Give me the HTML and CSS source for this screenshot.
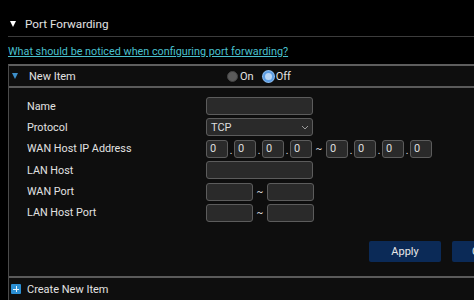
FILE: index.html
```html
<!DOCTYPE html>
<html lang="en">
<head>
  <meta charset="UTF-8">
  <title>Port Forwarding</title>
  <link rel="stylesheet" href="styles.css">
</head>
<body>
  <div class="page">
    <div class="section-head">
      <span class="tri tri-white"></span>
      <span>Port Forwarding</span>
    </div>
    <div class="tip">
      <a href="#">What should be noticed when configuring port forwarding?</a>
    </div>
    <div class="box">
      <div class="item-head">
        <span class="tri tri-blue"></span>
        <span class="item-title">New Item</span>
        <div class="switch">
          <label class="radio"><span class="dot"></span>On</label>
          <label class="radio"><span class="dot checked"></span>Off</label>
        </div>
      </div>
      <div class="item-body">
        <div class="row">
          <span class="label">Name</span>
          <span class="field wide"></span>
        </div>
        <div class="row">
          <span class="label">Protocol</span>
          <span class="field wide select">TCP
            <svg class="caret" width="8" height="5" viewBox="0 0 8 5"><path d="M1 1l3 3 3-3" fill="none" stroke="#9a9a9a" stroke-width="1"/></svg>
          </span>
        </div>
        <div class="row">
          <span class="label">WAN Host IP Address</span>
          <div class="ip">
            <span class="field oct">0</span><span class="sep">.</span>
            <span class="field oct">0</span><span class="sep">.</span>
            <span class="field oct">0</span><span class="sep">.</span>
            <span class="field oct">0</span><span class="tilde">~</span>
            <span class="field oct">0</span><span class="sep">.</span>
            <span class="field oct">0</span><span class="sep">.</span>
            <span class="field oct">0</span><span class="sep">.</span>
            <span class="field oct">0</span>
          </div>
        </div>
        <div class="row">
          <span class="label">LAN Host</span>
          <span class="field wide"></span>
        </div>
        <div class="row">
          <span class="label">WAN Port</span>
          <div class="ip">
            <span class="field port"></span><span class="tilde">~</span><span class="field port"></span>
          </div>
        </div>
        <div class="row">
          <span class="label">LAN Host Port</span>
          <div class="ip">
            <span class="field port"></span><span class="tilde">~</span><span class="field port"></span>
          </div>
        </div>
        <div class="actions">
          <button class="btn">Apply</button>
          <button class="btn btn-cancel">Cancel</button>
        </div>
      </div>
      <div class="create">
        <span class="plus"></span>
        <span>Create New Item</span>
      </div>
    </div>
  </div>
</body>
</html>
```

FILE: styles.css
```css
body {
  margin: 0;
  background: #000;
  color: #e2e2e2;
  font-family: Roboto, "Noto Sans", sans-serif;
  overflow: hidden;
}
.page {
  width: 560px;
  padding-left: 8px;
}
.section-head {
  display: flex;
  align-items: center;
  gap: 9px;
  height: 37px;
  box-sizing: border-box;
  padding: 12px 0 0 2px;
  font-size: 11.7px;
  border-bottom: 1px solid #3c3c3c;
}
.tri {
  width: 0;
  height: 0;
  border-left: 3.5px solid transparent;
  border-right: 3.5px solid transparent;
  border-top: 6px solid #fff;
}
.tri-blue {
  border-top-color: #3d8fca;
}
.tip {
  height: 27px;
  display: flex;
  align-items: center;
  padding-top: 1px;
  box-sizing: border-box;
  font-size: 10.8px;
}
.tip a {
  color: #49c1cf;
}
.box {
  border-top: 2px solid #5e5e5e;
  border-left: 1px solid #4a4a4a;
  background: #0e0e0e;
}
.item-head {
  height: 20px;
  display: flex;
  align-items: center;
  padding-left: 3px;
  font-size: 11px;
  border-bottom: 2px solid #5a5a5a;
}
.item-title {
  margin-left: 11px;
  width: 198px;
}
.switch {
  display: flex;
  gap: 9px;
}
.radio {
  display: flex;
  align-items: center;
  gap: 2px;
  font-size: 11px;
}
.dot {
  width: 9px;
  height: 9px;
  border-radius: 50%;
  background: #5b5b5b;
  border: 1px solid #444;
}
.dot.checked {
  background: #b9d6f6;
  border: 2px solid #5d9ee4;
  width: 7px;
  height: 7px;
  box-shadow: 0 0 0 1px #8dbdf0;
}
.item-body {
  padding: 9px 0 14px 18px;
  border-bottom: 2px solid #5a5a5a;
}
.row {
  display: flex;
  align-items: center;
  height: 18px;
  margin-bottom: 3.4px;
  font-size: 10.8px;
}
.label {
  width: 179px;
}
.field {
  display: inline-flex;
  align-items: center;
  box-sizing: border-box;
  height: 18px;
  background: #2a2a2a;
  border: 1px solid #5c5c5c;
  border-radius: 3px;
  padding-left: 4px;
  color: #dedede;
  font-size: 11px;
}
.wide {
  width: 107px;
}
.select {
  justify-content: space-between;
  padding-right: 3px;
}
.ip {
  display: flex;
  align-items: center;
}
.oct {
  width: 22px;
  padding-left: 3px;
}
.sep {
  width: 6px;
  text-align: center;
  font-size: 10px;
  align-self: flex-end;
  line-height: 14px;
}
.tilde {
  width: 14px;
  text-align: center;
  font-size: 10px;
}
.port {
  width: 47px;
}
.actions {
  display: flex;
  gap: 11px;
  margin-top: 19.5px;
  padding-left: 342px;
}
.btn {
  flex: none;
  width: 72px;
  height: 21px;
  border: none;
  border-radius: 2px;
  background: #0b2a57;
  color: #e8e8e8;
  font-family: inherit;
  font-size: 11px;
}
.btn-cancel {
  text-align: left;
  padding-left: 20px;
}
.create {
  height: 22px;
  display: flex;
  align-items: center;
  gap: 6px;
  padding-left: 2px;
  font-size: 11px;
}
.plus {
  width: 10px;
  height: 10px;
  background: #2b8fd3;
  border-radius: 1px;
  position: relative;
}
.plus::before,
.plus::after {
  content: "";
  position: absolute;
  background: #e4f2fc;
}
.plus::before {
  left: 2px;
  top: 4.5px;
  width: 6px;
  height: 1px;
}
.plus::after {
  left: 4.5px;
  top: 2px;
  width: 1px;
  height: 6px;
}
```
